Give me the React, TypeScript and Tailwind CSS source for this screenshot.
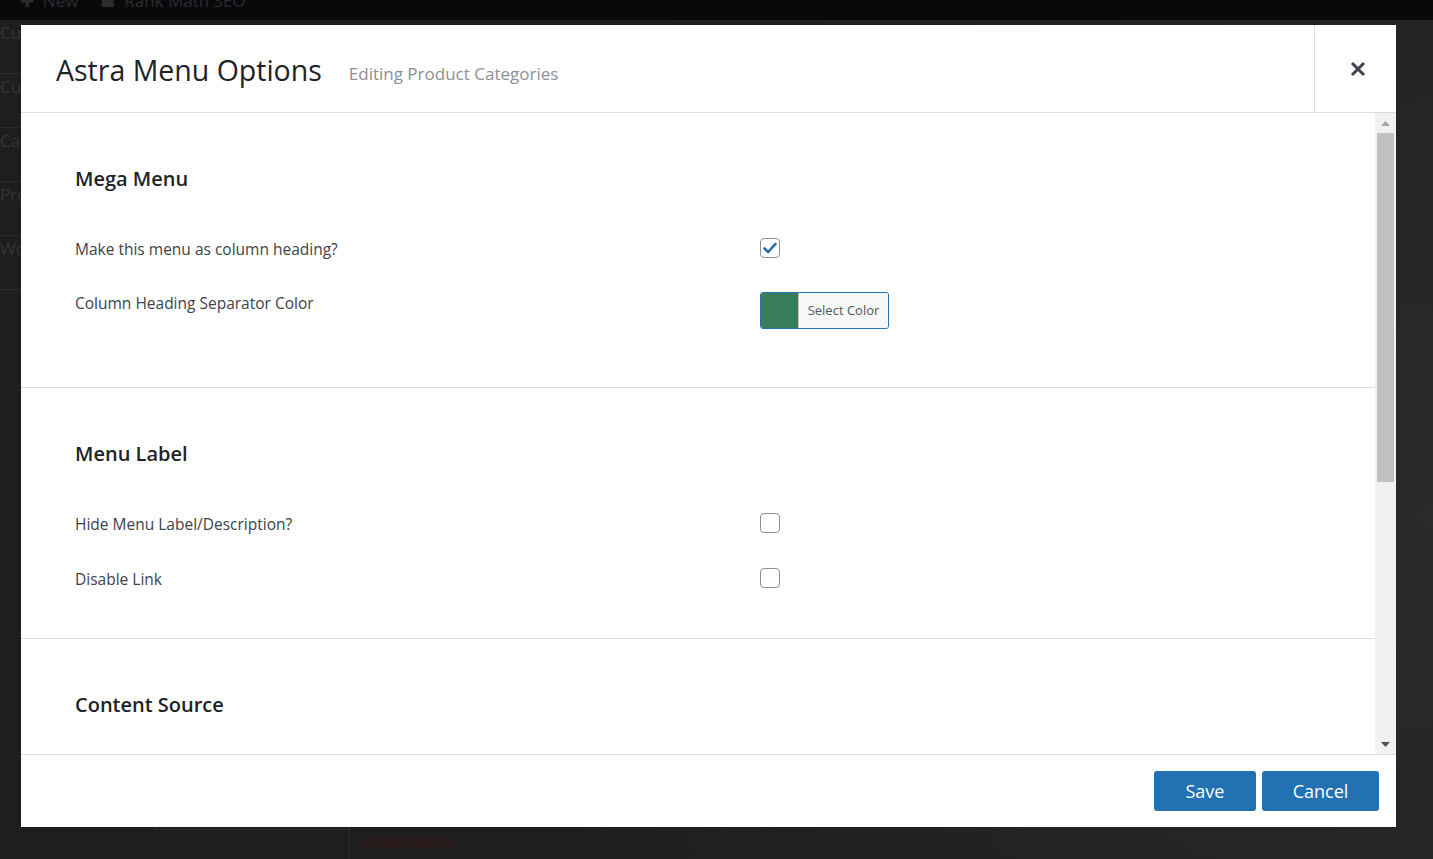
import React from "react";

const SIDE = ["Customer", "Custom Links", "Categories", "Products", "WooCommerce"];

function Check({ checked }: { checked?: boolean }) {
  return (
    <div className="w-[20px] h-[20px] rounded-[4px] border border-[#8c8f94] bg-white flex items-center justify-center">
      {checked && (
        <svg width="16" height="16" viewBox="0 0 16 16">
          <path d="M2.5 8.5 L6.2 12 L13.5 3.8" fill="none" stroke="#2271b1" strokeWidth="2.6" strokeLinecap="round" strokeLinejoin="round" />
        </svg>
      )}
    </div>
  );
}

function Row({ label, children, cls }: { label: string; children: React.ReactNode; cls?: string }) {
  return (
    <div className={"flex items-start " + (cls || "")}>
      <div className="w-[685px] text-[15.5px] leading-[22px] text-[#3c434a]">{label}</div>
      <div>{children}</div>
    </div>
  );
}

export default function App() {
  return (
    <div className="relative w-full h-[859px] overflow-hidden bg-[#202020]" style={{ fontFamily: '"Open Sans", "Noto Sans", sans-serif' }}>
      {/* page underneath the modal */}
      <div className="flex flex-col h-full bg-[radial-gradient(circle_at_100%_60%,#2a2a2a,#1e1e1e_60%)]">
        <div className="h-[20px] bg-[#09090b] flex items-start pl-[20px] overflow-hidden">
          <span className="text-[17px] leading-[17px] text-[#2c2c2e] -translate-y-[8px] whitespace-nowrap">✚&nbsp;&nbsp;New</span>
          <span className="text-[17px] leading-[17px] text-[#2c2c2e] -translate-y-[8px] ml-[22px] whitespace-nowrap">☗&nbsp;&nbsp;Rank Math SEO</span>
        </div>
        <div className="flex flex-col w-[21px] overflow-hidden">
          {SIDE.map(s => (
            <div key={s} className="h-[54px] text-[17px] text-[#343434] border-b border-[#2a2a2a] whitespace-nowrap">{s}</div>
          ))}
        </div>
        <div className="mt-auto flex h-[32px]">
          <div className="w-[350px] border-r border-[#2c2c2c] flex items-start justify-end">
            <div className="w-[194px] border-t border-dotted border-[#3a3a3a] mt-[2px]" />
          </div>
          <div className="pl-[14px] pt-[1px] text-[15px] text-[#3a1414] underline">Delete Menu</div>
        </div>
      </div>

      {/* modal */}
      <div className="absolute left-[21px] top-[25px] w-[1375px] h-[802px] bg-white flex flex-col">
        <div className="h-[88px] flex border-b border-[#dcdcde] shrink-0">
          <div className="flex-1 flex items-center pl-[35px] pt-[3px]">
            <span className="text-[28.5px] text-[#1d2327]">Astra Menu Options</span>
            <span className="ml-[27px] mt-[7px] text-[17px] text-[#8c8f94]">Editing Product Categories</span>
          </div>
          <div className="w-[82px] border-l border-[#dcdcde] flex items-center justify-center pl-[4px] pt-[1px]">
            <svg width="16" height="16" viewBox="0 0 16 16">
              <path d="M2 2 L14 14 M14 2 L2 14" stroke="#3c434a" strokeWidth="3" />
            </svg>
          </div>
        </div>

        <div className="flex-1 flex min-h-0">
          <div className="flex-1 overflow-hidden">
            <div className="px-[54px] pt-[52px] pb-[58px] border-b border-[#dcdcde]">
              <h2 className="text-[20px] leading-[28px] font-semibold text-[#1d2327]">Mega Menu</h2>
              <Row label="Make this menu as column heading?" cls="mt-[45px]">
                <Check checked />
              </Row>
              <Row label="Column Heading Separator Color" cls="mt-[32px]">
                <div className="flex h-[37px] w-[129px] rounded-[3px] border border-[#2271b1] overflow-hidden">
                  <div className="w-[38px] bg-[#3a7d5a] border-r border-[#c3c4c7]" />
                  <div className="flex-1 bg-[#f6f7f7] flex items-center justify-center text-[13px] text-[#50575e]">Select Color</div>
                </div>
              </Row>
            </div>
            <div className="px-[54px] pt-[52px] pb-[48px] border-b border-[#dcdcde]">
              <h2 className="text-[20px] leading-[28px] font-semibold text-[#1d2327]">Menu Label</h2>
              <Row label="Hide Menu Label/Description?" cls="mt-[45px]">
                <Check />
              </Row>
              <Row label="Disable Link" cls="mt-[33px]">
                <Check />
              </Row>
            </div>
            <div className="px-[54px] pt-[52px] pb-[48px]">
              <h2 className="text-[20px] leading-[28px] font-semibold text-[#1d2327]">Content Source</h2>
            </div>
          </div>
          <div className="w-[21px] bg-[#f1f1f1] flex flex-col items-center">
            <div className="h-[20px] flex items-center justify-center">
              <svg width="9" height="5" viewBox="0 0 9 5"><path d="M0 5 L4.5 0 L9 5 Z" fill="#a3a3a3" /></svg>
            </div>
            <div className="w-[17px] h-[349px] bg-[#c1c1c1]" />
            <div className="mt-auto h-[20px] flex items-center justify-center">
              <svg width="9" height="5" viewBox="0 0 9 5"><path d="M0 0 L9 0 L4.5 5 Z" fill="#505050" /></svg>
            </div>
          </div>
        </div>

        <div className="h-[73px] shrink-0 border-t border-[#dcdcde] flex justify-end items-start pt-[16px] pr-[17px] gap-[6px]">
          <button className="w-[102px] h-[40px] rounded-[3px] bg-[#2271b1] text-white text-[18px]">Save</button>
          <button className="w-[117px] h-[40px] rounded-[3px] bg-[#2271b1] text-white text-[18px]">Cancel</button>
        </div>
      </div>
    </div>
  );
}
